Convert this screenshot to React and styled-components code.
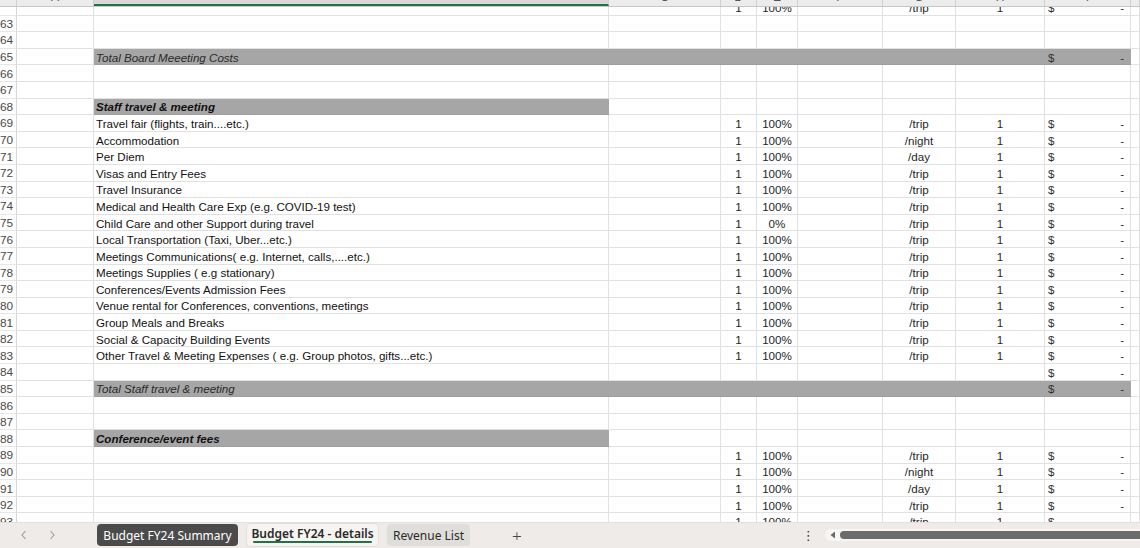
import React from "react";
import styled, { createGlobalStyle } from "styled-components";

const COLS = "17px 77px 515px 112px 36px 41px 85px 73px 89px 86px 1fr";
const ROW_H = 16.6;

const GlobalStyle = createGlobalStyle`
  html, body {
    margin: 0;
    padding: 0;
    background: #ffffff;
    overflow: hidden;
  }
  * {
    box-sizing: border-box;
  }
`;

const items = [
  "Travel fair (flights, train....etc.)",
  "Accommodation",
  "Per Diem",
  "Visas and Entry Fees",
  "Travel Insurance",
  "Medical and Health Care Exp (e.g. COVID-19 test)",
  "Child Care and other Support during travel",
  "Local Transportation (Taxi, Uber...etc.)",
  "Meetings Communications( e.g. Internet, calls,....etc.)",
  "Meetings Supplies ( e.g stationary)",
  "Conferences/Events Admission Fees",
  "Venue rental for Conferences, conventions, meetings",
  "Group Meals and Breaks",
  "Social & Capacity Building Events",
  "Other Travel & Meeting Expenses ( e.g. Group photos, gifts...etc.)",
];

const units = { 1: "/night", 2: "/day" };

const buildRows = () => {
  const rows = [];
  // row 62 sits mostly under the frozen header, its number is hidden
  rows.push({ n: 62, hideNum: true, type: "line", unit: "/trip" });
  rows.push({ n: 63, type: "empty" });
  rows.push({ n: 64, type: "empty" });
  rows.push({ n: 65, type: "total", label: "Total Board Meeeting Costs" });
  rows.push({ n: 66, type: "empty" });
  rows.push({ n: 67, type: "empty" });
  rows.push({ n: 68, type: "section", label: "Staff travel & meeting" });
  items.forEach((label, i) => {
    rows.push({
      n: 69 + i,
      type: "line",
      label,
      unit: units[i] || "/trip",
      pct: i === 6 ? "0%" : "100%",
    });
  });
  rows.push({ n: 84, type: "money" });
  rows.push({ n: 85, type: "total", label: "Total Staff travel & meeting" });
  rows.push({ n: 86, type: "empty" });
  rows.push({ n: 87, type: "empty" });
  rows.push({ n: 88, type: "section", label: "Conference/event fees" });
  ["/trip", "/night", "/day", "/trip", "/trip"].forEach((unit, i) => {
    rows.push({ n: 89 + i, type: "line", unit });
  });
  return rows;
};

const Sheet = ({ rows }) => (
  <Viewport>
    <ColHeader>
      <HeadCell />
      {["A", "B", "C", "D", "E", "F", "G", "H", "I", ""].map((l, i) => (
        <HeadCell key={i} selected={l === "B"}>
          {l}
        </HeadCell>
      ))}
    </ColHeader>
    <Body>
      {rows.map((r) => (
        <SheetRow key={r.n} row={r} />
      ))}
    </Body>
  </Viewport>
);

const Money = ({ shaded }) => (
  <AcctCell shaded={shaded}>
    <span>$</span>
    <span>-</span>
  </AcctCell>
);

const SheetRow = ({ row }) => {
  const num = <RowNum>{row.hideNum ? "" : row.n}</RowNum>;
  if (row.type === "total") {
    return (
      <Row>
        {num}
        <Cell />
        <Cell shaded span="3 / 10">
          <Label italic>{row.label}</Label>
        </Cell>
        <Money shaded />
        <Cell />
      </Row>
    );
  }
  if (row.type === "section") {
    return (
      <Row>
        {num}
        <Cell />
        <Cell shaded>
          <Label italic bold>
            {row.label}
          </Label>
        </Cell>
        {[0, 1, 2, 3, 4, 5, 6, 7].map((i) => (
          <Cell key={i} />
        ))}
      </Row>
    );
  }
  if (row.type === "line") {
    return (
      <Row>
        {num}
        <Cell />
        <Cell>
          <Label>{row.label}</Label>
        </Cell>
        <Cell />
        <Cell center>1</Cell>
        <Cell center>{row.pct || "100%"}</Cell>
        <Cell />
        <Cell center>{row.unit}</Cell>
        <Cell center>1</Cell>
        <Money />
        <Cell />
      </Row>
    );
  }
  if (row.type === "money") {
    return (
      <Row>
        {num}
        {[0, 1, 2, 3, 4, 5, 6, 7].map((i) => (
          <Cell key={i} />
        ))}
        <Money />
        <Cell />
      </Row>
    );
  }
  return (
    <Row>
      {num}
      {[0, 1, 2, 3, 4, 5, 6, 7, 8, 9].map((i) => (
        <Cell key={i} />
      ))}
    </Row>
  );
};

const ChevronLeft = () => (
  <svg width="10" height="12" viewBox="0 0 10 12">
    <path d="M6.5 2 L3 6 L6.5 10" fill="none" stroke="#9a9a9a" strokeWidth="1.1" />
  </svg>
);

const ChevronRight = () => (
  <svg width="10" height="12" viewBox="0 0 10 12">
    <path d="M3.5 2 L7 6 L3.5 10" fill="none" stroke="#9a9a9a" strokeWidth="1.1" />
  </svg>
);

const TabBar = () => (
  <Bar>
    <Nav>
      <NavBtn>
        <ChevronLeft />
      </NavBtn>
      <NavBtn>
        <ChevronRight />
      </NavBtn>
    </Nav>
    <Tabs>
      <Tab variant="dark" w={141}>
        Budget FY24 Summary
      </Tab>
      <Tab variant="active" w={131}>
        Budget FY24 - details
      </Tab>
      <Tab variant="plain" w={83}>
        Revenue List
      </Tab>
    </Tabs>
    <AddBtn>+</AddBtn>
    <Dots>⋮</Dots>
    <Scroll>
      <svg width="8" height="8" viewBox="0 0 8 8">
        <path d="M6 0.5 L1.5 4 L6 7.5 Z" fill="#6a6a6a" />
      </svg>
      <Thumb />
    </Scroll>
  </Bar>
);

export default function App() {
  const rows = buildRows();
  return (
    <>
      <GlobalStyle />
      <Page>
        <Sheet rows={rows} />
        <TabBar />
      </Page>
    </>
  );
}

const Page = styled.div`
  width: 1140px;
  height: 548px;
  display: flex;
  flex-direction: column;
  overflow: hidden;
  font-family: "Liberation Sans", Arial, sans-serif;
`;

const Viewport = styled.div`
  height: 522px;
  overflow: hidden;
  flex-shrink: 0;
`;

const ColHeader = styled.div`
  display: grid;
  grid-template-columns: ${COLS};
  height: 20px;
  margin-top: -13px;
  position: relative;
  z-index: 1;
  background: #e9e9e9;
  border-bottom: 1px solid #c6c6c6;
`;

const HeadCell = styled.div`
  display: flex;
  align-items: center;
  justify-content: center;
  font-size: 12px;
  color: #555;
  background: ${(p) => (p.selected ? "#d9d9d9" : "#ececec")};
  border-right: 1px solid #d0d0d0;
  border-bottom: ${(p) => (p.selected ? "2px solid #217346" : "none")};
`;

const Body = styled.div`
  margin-top: -8px;
`;

const Row = styled.div`
  display: grid;
  grid-template-columns: ${COLS};
  height: ${ROW_H}px;
`;

const RowNum = styled.div`
  display: flex;
  align-items: center;
  font-size: 11.8px;
  color: #4a4a4a;
  border-right: 1px solid #d6d6d6;
  border-bottom: 1px solid #e6e6e6;
  padding-top: 1px;
  white-space: nowrap;
`;

const Cell = styled.div`
  grid-column: ${(p) => p.span || "auto"};
  display: flex;
  align-items: center;
  justify-content: ${(p) => (p.center ? "center" : "flex-start")};
  padding: 1px 2px 0 2px;
  font-size: 11.6px;
  color: #1f1f1f;
  white-space: nowrap;
  overflow: visible;
  background: ${(p) => (p.shaded ? "#a6a6a6" : "transparent")};
  border-right: 1px solid ${(p) => (p.shaded ? "#a6a6a6" : "#e1e1e1")};
  border-bottom: 1px solid ${(p) => (p.shaded ? "#9d9d9d" : "#e1e1e1")};
`;

const Label = styled.span`
  font-style: ${(p) => (p.italic ? "italic" : "normal")};
  font-weight: ${(p) => (p.bold ? 700 : 400)};
  color: ${(p) => (p.italic && !p.bold ? "#2a2a2a" : "#111")};
`;

const AcctCell = styled(Cell)`
  justify-content: space-between;
  padding: 1px 6px 0 3px;
  color: #333;
`;

const Bar = styled.div`
  flex: 1;
  display: flex;
  align-items: flex-start;
  background: #eeebe8;
  border-top: 1px solid #e2dfdc;
  padding-top: 1px;
`;

const Nav = styled.div`
  display: flex;
  gap: 18px;
  padding-left: 19px;
  width: 97px;
  height: 22px;
  align-items: center;
`;

const NavBtn = styled.div`
  width: 10px;
  height: 12px;
  display: flex;
`;

const Tabs = styled.div`
  display: flex;
  gap: 9px;
`;

const Tab = styled.div`
  width: ${(p) => p.w}px;
  height: 22px;
  display: flex;
  align-items: center;
  justify-content: center;
  border-radius: 4px;
  font-family: "Noto Sans", "Open Sans", sans-serif;
  font-size: 12px;
  white-space: nowrap;
  position: relative;
  color: ${(p) => (p.variant === "dark" ? "#ffffff" : "#2a2a2a")};
  font-weight: ${(p) => (p.variant === "active" ? 600 : 400)};
  background: ${(p) =>
    p.variant === "dark" ? "#4b4b4b" : p.variant === "active" ? "#f6f4f2" : "#e0dedb"};
  box-shadow: ${(p) => (p.variant === "active" ? "0 0 0 1px #e2dfdc" : "none")};
  padding-bottom: ${(p) => (p.variant === "active" ? "4px" : "0")};

  &::after {
    content: "";
    display: ${(p) => (p.variant === "active" ? "block" : "none")};
    position: absolute;
    left: 6px;
    right: 6px;
    bottom: 3px;
    height: 2px;
    border-radius: 1px;
    background: #217346;
  }
`;

const AddBtn = styled.div`
  margin-left: 42px;
  height: 22px;
  display: flex;
  align-items: center;
  font-family: "Noto Sans", sans-serif;
  font-size: 17px;
  font-weight: 300;
  color: #444;
`;

const Dots = styled.div`
  margin-left: 280px;
  height: 22px;
  display: flex;
  align-items: center;
  font-family: "DejaVu Sans", sans-serif;
  font-size: 13px;
  color: #333;
`;

const Scroll = styled.div`
  margin-left: 10px;
  margin-top: 5px;
  flex: 1;
  height: 12px;
  display: flex;
  align-items: center;
  gap: 3px;
  padding-left: 4px;
  background: #f7f6f5;
  border-radius: 6px 0 0 6px;
`;

const Thumb = styled.div`
  flex: 1;
  height: 8px;
  border-radius: 4px 0 0 4px;
  background: #6c6c6c;
`;
